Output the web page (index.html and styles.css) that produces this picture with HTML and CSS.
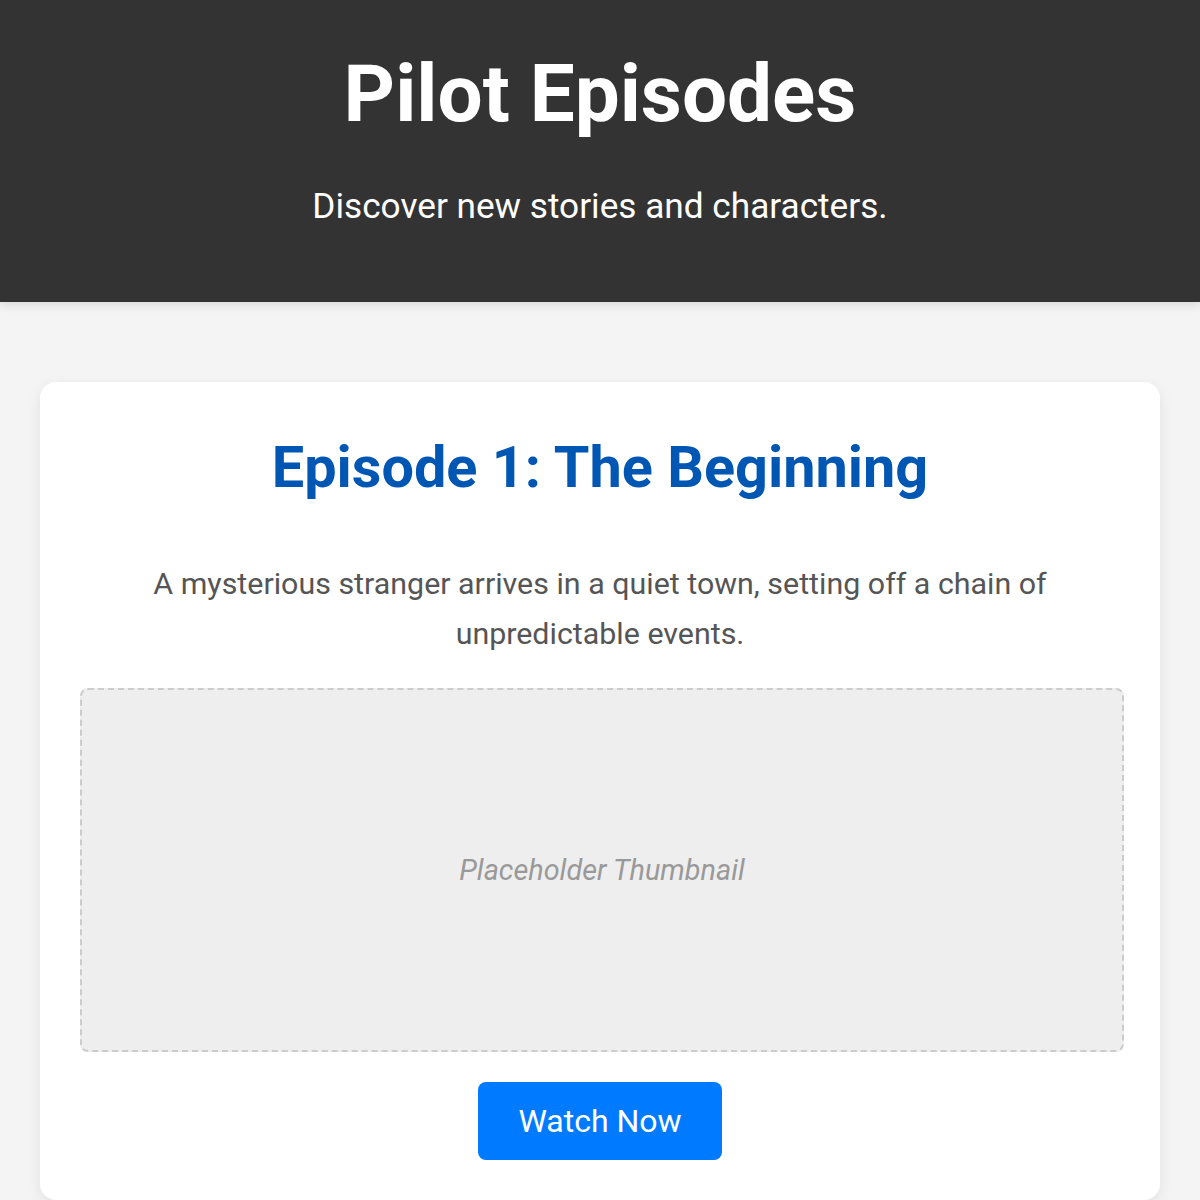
FILE: index.html
```html
<!DOCTYPE html>
<html>
    <head>
        <meta charset="utf-8">
        <title>Pilot Episodes</title>
        <link rel="stylesheet" href="styles.css">
    </head>
    <body>

    <header class="site-header">
        <h1>Pilot Episodes</h1>
        <p class="tagline">Discover new stories and characters.</p>
    </header>

    <main class="episodes">
        <article class="episode">
            <h2>Episode 1: The Beginning</h2>
            <p class="episode-desc">A mysterious stranger arrives in a quiet town, setting off a chain of unpredictable events.</p>
            <div class="thumb">Placeholder Thumbnail</div>
            <a class="btn" href="#">Watch Now</a>
        </article>
    </main>

</body>
</html>
```

FILE: styles.css
```css
body, html {
    margin: 0;
    padding: 0;
    font-family: Roboto, "Liberation Sans", Arial, sans-serif;
}
body {
    background: #f4f4f4;
}
.site-header {
    background: #333;
    color: #fff;
    text-align: center;
    padding: 46px 20px 72px;
    box-shadow: 0 2px 10px rgba(0, 0, 0, .12);
}
.site-header h1 {
    margin: 0;
    font-size: 80px;
    line-height: 96px;
    font-weight: bold;
}
.tagline {
    margin: 40px 0 0;
    font-size: 35.2px;
    line-height: 48px;
}
.episodes {
    padding: 80px 40px 0;
}
.episode {
    background: #fff;
    border-radius: 16px;
    padding: 40px;
    text-align: center;
    box-shadow: 0 4px 14px rgba(0, 0, 0, .08);
}
.episode h2 {
    margin: 10px 0 0;
    color: #0056b3;
    font-size: 57.6px;
    line-height: 72px;
    font-weight: bold;
}
.episode-desc {
    margin: 55px 0 0;
    color: #555;
    font-size: 30.4px;
    line-height: 50px;
}
.thumb {
    margin-top: 29px;
    width: 100%;
    height: 360px;
    background: #eee;
    border: dashed 2px #ccc;
    border-radius: 8px;
    display: flex;
    align-items: center;
    justify-content: center;
    color: #999;
    font-style: italic;
    font-size: 28.8px;
}
.btn {
    display: inline-block;
    margin-top: 30px;
    padding: 20px 40px;
    background: #007bff;
    color: #fff;
    font-size: 32px;
    line-height: 38px;
    text-decoration: none;
    border-radius: 8px;
}
```
